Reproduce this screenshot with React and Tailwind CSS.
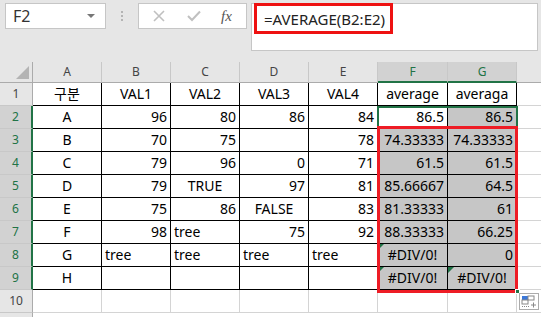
import React from "react";

const font = { fontFamily: '"Noto Sans", "Noto Sans CJK KR", sans-serif' };

const cols = ["A", "B", "C", "D", "E", "F", "G"];
const widths = ["w-[69px]", "w-[69px]", "w-[69px]", "w-[69px]", "w-[69px]", "w-[70px]", "w-[69px]"];

// [text, align, grey fill, error mark]
const rows = [
  [["구분", "c"], ["VAL1", "c"], ["VAL2", "c"], ["VAL3", "c"], ["VAL4", "c"], ["average", "c"], ["averaga", "c"]],
  [["A", "c"], ["96", "r"], ["80", "r"], ["86", "r"], ["84", "r"], ["86.5", "r"], ["86.5", "r", 1]],
  [["B", "c"], ["70", "r"], ["75", "r"], ["", "r"], ["78", "r"], ["74.33333", "r", 1], ["74.33333", "r", 1]],
  [["C", "c"], ["79", "r"], ["96", "r"], ["0", "r"], ["71", "r"], ["61.5", "r", 1], ["61.5", "r", 1]],
  [["D", "c"], ["79", "r"], ["TRUE", "c"], ["97", "r"], ["81", "r"], ["85.66667", "r", 1], ["64.5", "r", 1]],
  [["E", "c"], ["75", "r"], ["86", "r"], ["FALSE", "c"], ["83", "r"], ["81.33333", "r", 1], ["61", "r", 1]],
  [["F", "c"], ["98", "r"], ["tree", "l"], ["75", "r"], ["92", "r"], ["88.33333", "r", 1], ["66.25", "r", 1]],
  [["G", "c"], ["tree", "l"], ["tree", "l"], ["tree", "l"], ["tree", "l"], ["#DIV/0!", "c", 1, 1], ["0", "r", 1]],
  [["H", "c"], ["", "l"], ["", "l"], ["", "l"], ["", "l"], ["#DIV/0!", "c", 1, 1], ["#DIV/0!", "c", 1, 1]],
  [["", "l"], ["", "l"], ["", "l"], ["", "l"], ["", "l"], ["", "l"], ["", "l"]],
];

const justify = { l: "justify-start", c: "justify-center", r: "justify-end" };

function Cell({ w, cell, boxed }) {
  const [text, align, fill, err] = cell;
  return (
    <div
      className={`${w} relative h-[23px] shrink-0 border-r border-b flex items-center px-[3px] text-[14px] leading-none text-black whitespace-nowrap overflow-visible ${
        justify[align]
      } ${boxed ? "border-black" : "border-[#d4d4d4]"} ${fill ? "bg-[#c6c6c6]" : "bg-white"}`}
    >
      {err ? (
        <span className="absolute left-0 top-0 w-0 h-0 border-t-[6px] border-r-[6px] border-t-[#217346] border-r-transparent" />
      ) : null}
      {text}
    </div>
  );
}

function FormulaBar() {
  return (
    <div className="h-[62px] bg-[#e6e6e6] relative">
      <div className="flex items-start pt-[3px] pl-[5px]">
        <div className="w-[101px] h-[26px] bg-white border border-[#c6c6c6] flex items-center justify-between pl-[7px] pr-[10px]">
          <span className="text-[16px] text-[#333] leading-none">F2</span>
          <span className="w-0 h-0 border-l-[4px] border-r-[4px] border-t-[4px] border-l-transparent border-r-transparent border-t-[#777]" />
        </div>
        <div className="w-[32px] h-[26px] flex flex-col items-center justify-center gap-[2px]">
          <span className="w-[2px] h-[2px] bg-[#b4b4b4]" />
          <span className="w-[2px] h-[2px] bg-[#b4b4b4]" />
          <span className="w-[2px] h-[2px] bg-[#b4b4b4]" />
        </div>
        <div className="w-[109px] h-[26px] bg-white border border-[#c6c6c6] flex items-center pl-[14px]">
          <svg width="12" height="12" viewBox="0 0 12 12" className="mr-[22px]">
            <path d="M1 1 L11 11 M11 1 L1 11" stroke="#c0c0c0" strokeWidth="1.6" />
          </svg>
          <svg width="14" height="12" viewBox="0 0 14 12" className="mr-[20px]">
            <path d="M1 6 L5 10 L13 1.5" stroke="#c0c0c0" strokeWidth="2" fill="none" />
          </svg>
          <span className="text-[15px] italic text-[#555] leading-none" style={{ fontFamily: '"Liberation Serif", serif' }}>
            fx
          </span>
        </div>
        <div className="ml-[4px] w-[287px] h-[48px] bg-white border border-[#c6c6c6] relative">
          <div className="absolute left-[2px] -top-[1px] w-[139px] h-[31px] border-[3px] border-[#ee1111]" />
          <div className="pl-[12px] pt-[6px] text-[15px] text-[#222] leading-[18px]">=AVERAGE(B2:E2)</div>
        </div>
      </div>
    </div>
  );
}

function Sheet() {
  return (
    <div className="relative">
      {/* column headers */}
      <div className="flex h-[21px] bg-[#e6e6e6] text-[12px] text-[#444]">
        <div className="w-[33px] shrink-0 border-r border-b border-[#ababab] relative">
          <span className="absolute right-[3px] bottom-[3px] w-0 h-0 border-b-[13px] border-l-[13px] border-b-[#b4b4b4] border-l-transparent" />
        </div>
        {cols.map((c, i) => {
          const sel = c === "F" || c === "G";
          return (
            <div
              key={c}
              className={`${widths[i]} shrink-0 flex items-center justify-center border-r border-r-[#c8c8c8] ${
                sel ? "bg-[#d2d2d2] text-[#217346] border-b-2 border-b-[#217346]" : "border-b border-b-[#ababab]"
              }`}
            >
              {c}
            </div>
          );
        })}
        <div className="w-[24px] shrink-0 border-b border-[#ababab]" />
      </div>

      {rows.map((r, ri) => {
        const n = ri + 1;
        const sel = n >= 2 && n <= 9;
        return (
          <div key={n} className="flex">
            <div
              className={`w-[33px] h-[23px] shrink-0 flex items-center justify-center text-[12px] border-b border-b-[#c8c8c8] ${
                sel
                  ? "bg-[#d2d2d2] text-[#217346] border-r-2 border-r-[#217346]"
                  : "bg-[#e6e6e6] text-[#444] border-r border-r-[#ababab]"
              }`}
            >
              {n}
            </div>
            {r.map((cell, ci) => (
              <Cell key={ci} w={widths[ci]} cell={cell} boxed={n <= 9} />
            ))}
            <div className="w-[24px] h-[23px] shrink-0 border-b border-[#d4d4d4] bg-white" />
          </div>
        );
      })}
      <div className="flex h-[4px]">
        <div className="w-[33px] shrink-0 bg-[#e6e6e6] border-r border-[#ababab]" />
        <div className="flex-1 bg-white" />
      </div>

      {/* selection F2:G9 */}
      <div className="absolute left-[377px] top-[44px] w-[141px] h-[186px] border-2 border-[#217346] pointer-events-none" />
      {/* red highlight F3:G9 */}
      <div className="absolute left-[377px] top-[64px] w-[141px] h-[167px] border-[3px] border-[#ee1c25] pointer-events-none" />
      {/* fill handle */}
      <div className="absolute left-[515px] top-[227px] w-[5px] h-[5px] bg-[#217346] border border-white" />
      {/* paste options */}
      <div className="absolute left-[519px] top-[231px] w-[20px] h-[17px] bg-white border border-[#ababab] flex items-center justify-center">
        <svg width="16" height="13" viewBox="0 0 16 13">
          <rect x="1" y="1" width="6" height="4" fill="#3c78d8" />
          <rect x="7" y="1" width="6" height="4" fill="none" stroke="#888" strokeWidth="1" />
          <rect x="1" y="5" width="6" height="4" fill="none" stroke="#888" strokeWidth="1" />
          <path d="M1 11.5 H8" stroke="#888" strokeWidth="1" strokeDasharray="1 1" />
          <path d="M10 10 H15 M12.5 7.5 V12.5" stroke="#888" strokeWidth="1" />
        </svg>
      </div>
    </div>
  );
}

export default function App() {
  return (
    <div className="w-[541px] h-[317px] overflow-hidden bg-white" style={font}>
      <FormulaBar />
      <Sheet />
    </div>
  );
}
